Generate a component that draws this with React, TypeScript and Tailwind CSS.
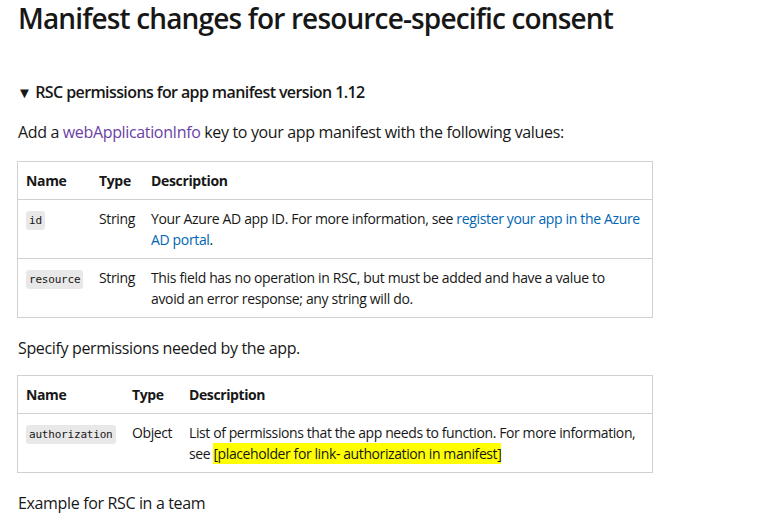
import React from "react";

const font = { fontFamily: '"Open Sans", "Noto Sans", sans-serif' };

function Code({ children }: { children: React.ReactNode }) {
  return (
    <code className="rounded-[3px] bg-[#e8e8e8] px-[3px] py-[3px] font-['DejaVu_Sans_Mono',monospace] text-[11px] tracking-[-0.2px] text-[#171717]">
      {children}
    </code>
  );
}

export default function App() {
  return (
    <div className="min-h-[530px] w-[784px] bg-white pl-[18px] text-[#171717]" style={font}>
      <h1 className="text-[28px] font-semibold leading-[36px] tracking-[-0.85px]">
        Manifest changes for resource-specific consent
      </h1>

      <div className="mt-[44px] flex items-center text-[16px] font-semibold leading-[24px] tracking-[-0.6px]">
        <span className="ml-[-1px] mr-[4px] text-[15px] leading-none">▼</span>
        <span>RSC permissions for app manifest version 1.12</span>
      </div>

      <p className="mt-[16px] text-[16px] leading-[24px] tracking-[-0.35px]">
        Add a <span className="text-[#6b3fa6]">webApplicationInfo</span> key to your app manifest with the following values:
      </p>

      <div className="ml-[-1px] mt-[17px] w-[636px] border border-[#d1d1d1] text-[14px] leading-[21px] tracking-[-0.35px]">
        <div className="grid grid-cols-[73px_52px_1fr] font-bold">
          <div className="py-[8px] pl-[8px]">Name</div>
          <div className="py-[8px] pl-[8px]">Type</div>
          <div className="py-[8px] pl-[8px]">Description</div>
        </div>
        <div className="grid grid-cols-[73px_52px_1fr] border-t border-[#d1d1d1]">
          <div className="py-[8px] pl-[8px]"><Code>id</Code></div>
          <div className="py-[8px] pl-[8px]">String</div>
          <div className="py-[8px] pl-[8px] pr-[8px]">
            <span className="whitespace-nowrap">
              Your Azure AD app ID. For more information, see{" "}
              <span className="text-[#0065b3]">register your app in the Azure</span>
            </span>
            <br />
            <span className="text-[#0065b3]">AD portal</span>.
          </div>
        </div>
        <div className="grid grid-cols-[73px_52px_1fr] border-t border-[#d1d1d1]">
          <div className="py-[8px] pl-[8px]"><Code>resource</Code></div>
          <div className="py-[8px] pl-[8px]">String</div>
          <div className="py-[8px] pl-[8px] pr-[8px]">
            <span className="whitespace-nowrap">
              This field has no operation in RSC, but must be added and have a value to
            </span>
            <br />
            avoid an error response; any string will do.
          </div>
        </div>
      </div>

      <p className="mt-[18px] text-[16px] leading-[24px] tracking-[-0.35px]">Specify permissions needed by the app.</p>

      <div className="ml-[-1px] mt-[15px] w-[636px] border border-[#d1d1d1] text-[14px] leading-[21px] tracking-[-0.4px]">
        <div className="grid grid-cols-[106px_57px_1fr] font-bold">
          <div className="py-[8px] pl-[8px]">Name</div>
          <div className="py-[8px] pl-[8px]">Type</div>
          <div className="py-[8px] pl-[8px]">Description</div>
        </div>
        <div className="grid grid-cols-[106px_57px_1fr] border-t border-[#d1d1d1]">
          <div className="py-[8px] pl-[8px]"><Code>authorization</Code></div>
          <div className="py-[8px] pl-[8px]">Object</div>
          <div className="py-[8px] pl-[8px] pr-[8px]">
            <span className="whitespace-nowrap">
              List of permissions that the app needs to function. For more information,
            </span>
            <br />
            see <span className="bg-[#ffff00] py-[1px]">[placeholder for link- authorization in manifest]</span>
          </div>
        </div>
      </div>

      <p className="mt-[18px] text-[16px] leading-[24px] tracking-[-0.35px]">Example for RSC in a team</p>
    </div>
  );
}
